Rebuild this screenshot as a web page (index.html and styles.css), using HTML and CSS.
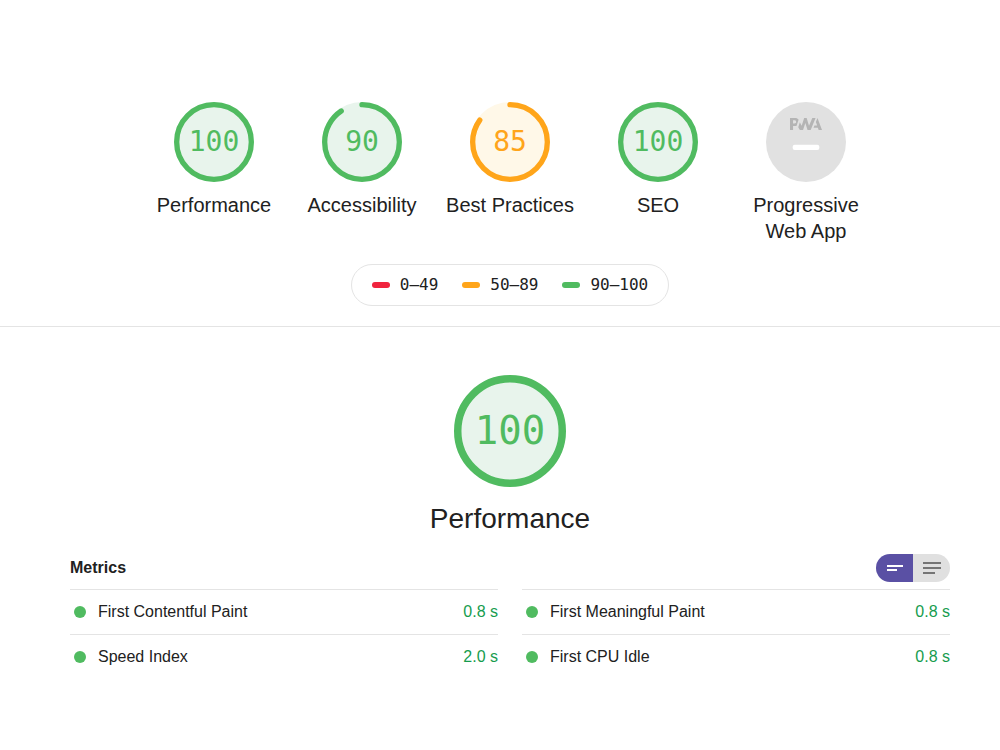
FILE: index.html
```html
<!DOCTYPE html>
<html lang="en">
<head>
<meta charset="utf-8">
<meta name="viewport" content="width=device-width, initial-scale=1">
<title>Lighthouse Report</title>
<link rel="stylesheet" href="styles.css">
</head>
<body>
<header class="scores-header">
  <nav class="scores" aria-label="Category scores">
    <a class="gauge gauge--pass" href="#performance">
      <span class="dial">
        <svg class="dial__ring" viewBox="0 0 120 120" aria-hidden="true"><circle class="dial__base" cx="60" cy="60" r="60"/><circle class="dial__arc" cx="60" cy="60" r="56"/></svg>
        <span class="dial__value">100</span>
      </span>
      <span class="gauge__label">Performance</span>
    </a>
    <a class="gauge gauge--pass" href="#accessibility">
      <span class="dial">
        <svg class="dial__ring" viewBox="0 0 120 120" aria-hidden="true"><circle class="dial__base" cx="60" cy="60" r="60"/><circle class="dial__arc" cx="60" cy="60" r="56" pathLength="100" stroke-dasharray="90.6 100"/></svg>
        <span class="dial__value">90</span>
      </span>
      <span class="gauge__label">Accessibility</span>
    </a>
    <a class="gauge gauge--average" href="#best-practices">
      <span class="dial">
        <svg class="dial__ring" viewBox="0 0 120 120" aria-hidden="true"><circle class="dial__base" cx="60" cy="60" r="60"/><circle class="dial__arc" cx="60" cy="60" r="56" pathLength="100" stroke-dasharray="85 100"/></svg>
        <span class="dial__value">85</span>
      </span>
      <span class="gauge__label">Best Practices</span>
    </a>
    <a class="gauge gauge--pass" href="#seo">
      <span class="dial">
        <svg class="dial__ring" viewBox="0 0 120 120" aria-hidden="true"><circle class="dial__base" cx="60" cy="60" r="60"/><circle class="dial__arc" cx="60" cy="60" r="56"/></svg>
        <span class="dial__value">100</span>
      </span>
      <span class="gauge__label">SEO</span>
    </a>
    <a class="gauge" href="#pwa">
      <svg class="pwa" viewBox="0 0 60 60" aria-hidden="true">
        <circle fill="#e1e1e1" cx="30" cy="30" r="30"/>
        <g fill="#b4b4b4">
          <path d="M35.66 19.39l.7-1.75h2L37.4 15 38.6 12l3.4 9h-2.51l-.58-1.61z"/>
          <path d="M33.52 21l3.65-9h-2.42l-2.5 5.82L30.5 12h-1.86l-1.9 5.82-1.35-2.65-1.21 3.72L25.4 21h2.38l1.72-5.2 1.64 5.2z"/>
          <path d="M20.3 17.91h1.48c.45 0 .85-.05 1.2-.15l.39-1.18 1.07-3.3a2.64 2.64 0 0 0-.28-.37c-.55-.6-1.36-.91-2.42-.91H18v9h2.3V17.9zm1.96-3.84c.22.22.33.5.33.87 0 .36-.1.65-.29.87-.2.23-.59.35-1.15.35h-.86v-2.41h.87c.52 0 .89.1 1.1.32z"/>
        </g>
        <rect fill="#fff" x="20" y="32" width="20" height="4" rx="1.5"/>
      </svg>
      <span class="gauge__label">Progressive Web App</span>
    </a>
  </nav>
  <div class="scale">
    <span class="scale__range scale__range--fail">0–49</span>
    <span class="scale__range scale__range--average">50–89</span>
    <span class="scale__range scale__range--pass">90–100</span>
  </div>
</header>
<main class="category" id="performance">
  <div class="category__head gauge--pass">
    <div class="dial dial--large">
      <svg class="dial__ring" viewBox="0 0 120 120" aria-hidden="true"><circle class="dial__base" cx="60" cy="60" r="60"/><circle class="dial__arc" cx="60" cy="60" r="56"/></svg>
      <span class="dial__value">100</span>
    </div>
    <h1 class="category__title">Performance</h1>
  </div>
  <div class="metrics-head">
    <h2 class="metrics-head__title">Metrics</h2>
    <div class="toggle" role="group" aria-label="Metric descriptions">
      <button class="toggle__button toggle__button--active" type="button" aria-label="Compact view" aria-pressed="true">
        <svg class="toggle__icon" viewBox="0 0 24 24" aria-hidden="true"><path d="M4 10H20M4 14H14"/></svg>
      </button>
      <button class="toggle__button" type="button" aria-label="Expanded view" aria-pressed="false">
        <svg class="toggle__icon" viewBox="0 0 24 24" aria-hidden="true"><path d="M3 7H21M3 12H21M3 17H15"/></svg>
      </button>
    </div>
  </div>
  <div class="metrics">
    <div class="metric"><span class="metric__name">First Contentful Paint</span><span class="metric__value">0.8 s</span></div>
    <div class="metric"><span class="metric__name">First Meaningful Paint</span><span class="metric__value">0.8 s</span></div>
    <div class="metric"><span class="metric__name">Speed Index</span><span class="metric__value">2.0 s</span></div>
    <div class="metric"><span class="metric__name">First CPU Idle</span><span class="metric__value">0.8 s</span></div>
  </div>
</main>
</body>
</html>
```

FILE: styles.css
```css
:root {
  --pass: #50bb60;
  --average: #ffa51a;
  --fail: #f0243e;
  --line: #e4e4e4;
  --mono: "DejaVu Sans Mono", monospace;
}

* {
  box-sizing: border-box;
}

body {
  margin: 0;
  background: #fff;
  color: #212121;
  font: 16px/24px "Liberation Sans", Arial, sans-serif;
}

.scores-header {
  display: flex;
  flex-direction: column;
  align-items: center;
  padding: 102px 50px 20px 70px;
  border-bottom: 1px solid var(--line);
}

.scores {
  display: flex;
  flex-wrap: wrap;
  justify-content: center;
}

.gauge {
  display: flex;
  flex-direction: column;
  align-items: center;
  gap: 10px;
  width: 148px;
  padding: 0 8px;
  color: inherit;
  text-decoration: none;
}

.gauge--pass {
  --tone: var(--pass);
  --tint: #e8f4ec;
}

.gauge--average {
  --tone: var(--average);
  --tint: #fff8e8;
}

.gauge__label {
  font-size: 20px;
  line-height: 26px;
  text-align: center;
}

.dial {
  display: grid;
  place-items: center;
  width: 80px;
  height: 80px;
  font: 28px/32px var(--mono);
  color: var(--tone);
}

.dial--large {
  width: 112px;
  height: 112px;
  font-size: 39px;
  line-height: 44px;
}

.dial__ring,
.dial__value {
  grid-area: 1 / 1;
}

.dial__ring {
  width: 100%;
  height: 100%;
  transform: rotate(-90deg);
}

.dial__value {
  z-index: 1;
}

.dial__base {
  fill: var(--tint);
}

.dial__arc {
  fill: none;
  stroke: var(--tone);
  stroke-width: 8;
  stroke-linecap: round;
}

.pwa {
  width: 80px;
  height: 80px;
}

.scale {
  display: flex;
  gap: 24px;
  margin-top: 20px;
  padding: 8px 20px;
  border: 1px solid var(--line);
  border-radius: 21px;
  font-family: var(--mono);
}

.scale__range {
  display: flex;
  align-items: center;
  gap: 10px;
}

.scale__range::before {
  content: "";
  width: 18px;
  height: 6px;
  border-radius: 3px;
  background: var(--tone);
}

.scale__range--fail {
  --tone: var(--fail);
}

.scale__range--average {
  --tone: var(--average);
}

.scale__range--pass {
  --tone: var(--pass);
}

.category {
  padding: 48px 50px 48px 70px;
}

.category__head {
  display: flex;
  flex-direction: column;
  align-items: center;
  gap: 14px;
}

.category__title {
  margin: 0;
  font-size: 28px;
  font-weight: 400;
  line-height: 36px;
}

.metrics-head {
  display: flex;
  align-items: center;
  justify-content: space-between;
  margin: 17px 0 7px;
}

.metrics-head__title {
  margin: 0;
  font-size: 16px;
}

.toggle {
  display: flex;
  border-radius: 14px;
  overflow: hidden;
}

.toggle__button {
  display: flex;
  align-items: center;
  justify-content: center;
  width: 37px;
  height: 28px;
  padding: 0;
  border: 0;
  background: #e0e0e0;
  color: #757575;
}

.toggle__button--active {
  background: #5a50a4;
  color: #fff;
}

.toggle__icon {
  width: 24px;
  height: 24px;
  fill: none;
  stroke: currentColor;
  stroke-width: 2;
}

.metrics {
  display: grid;
  grid-template-columns: 1fr 1fr;
  column-gap: 24px;
}

.metric {
  display: flex;
  align-items: center;
  padding: 10px 0;
  border-top: 1px solid var(--line);
}

.metric::before {
  content: "";
  width: 12px;
  height: 12px;
  margin: 0 12px 0 4px;
  border-radius: 50%;
  background: var(--pass);
}

.metric__value {
  margin-left: auto;
  color: #169c4e;
}
```
